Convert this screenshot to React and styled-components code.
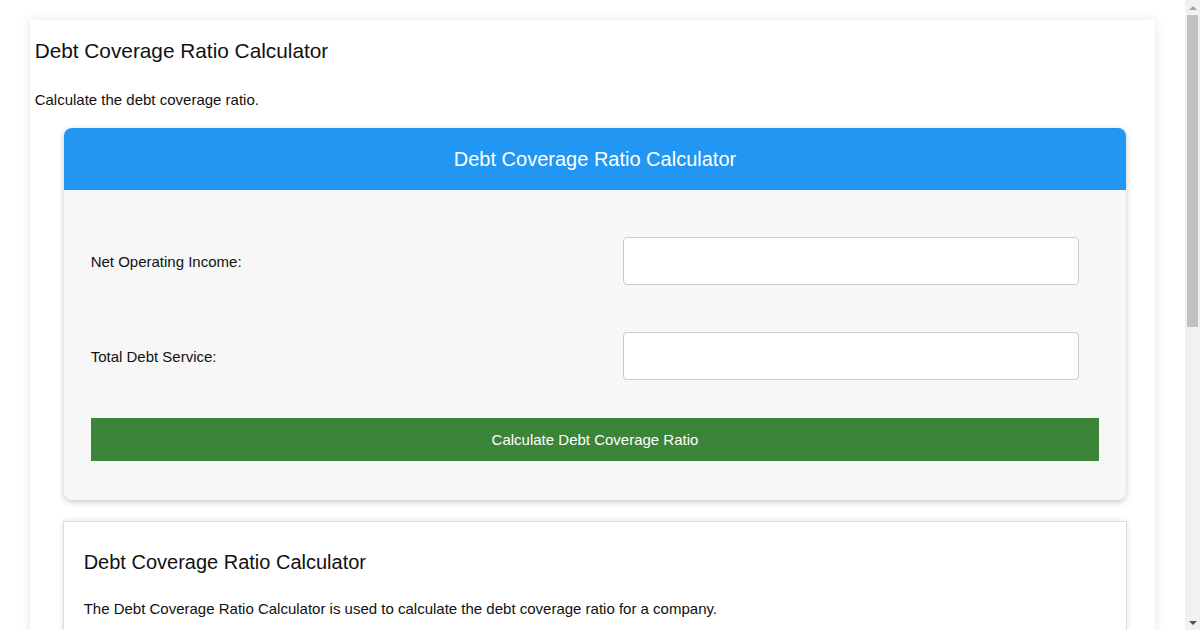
import React from "react";
import styled, { createGlobalStyle } from "styled-components";

const Global = createGlobalStyle`
  html, body { margin: 0; padding: 0; background: #ffffff; }
  html::-webkit-scrollbar { display: none; }
  html { scrollbar-width: none; }
  body { font-family: "Liberation Sans", Arial, sans-serif; color: #111; font-size: 15px; }
  * { box-sizing: border-box; }
`;

const Viewport = styled.div`
  display: flow-root;
  margin-right: 15px;
`;

const ScrollRail = styled.div`
  position: fixed;
  top: 0;
  right: 0;
  width: 15px;
  height: 100vh;
  background: #f1f1f1;
  display: flex;
  flex-direction: column;
  align-items: center;
  z-index: 10;
`;

const Arrow = styled.div`
  width: 15px;
  height: 15px;
  display: flex;
  align-items: center;
  justify-content: center;
  &::before {
    content: "";
    width: 0;
    height: 0;
    border-left: 4px solid transparent;
    border-right: 4px solid transparent;
    ${(p) =>
      p.$down
        ? `border-top: 4px solid #505050;`
        : `border-bottom: 4px solid #a3a3a3;`}
  }
`;

const Thumb = styled.div`
  width: 11px;
  height: 312px;
  background: #c1c1c1;
`;

const Spacer = styled.div`
  flex: 1;
`;

const Page = styled.div`
  display: flow-root;
  width: 95%;
  margin: 20px auto;
  padding: 0 0 20px 5px;
  background: #ffffff;
  box-shadow: 0 0 10px rgba(0, 0, 0, 0.1);
`;

const Title = styled.h2`
  margin: 19px 0 28px;
  font-size: 20.8px;
  line-height: 24px;
  font-weight: 400;
`;

const Intro = styled.p`
  margin: 0;
  font-size: 15px;
  line-height: 18px;
`;

const Card = styled.div`
  width: calc(95% - 2px);
  margin: 19px auto 0;
  border-radius: 8px;
  overflow: hidden;
  background: #f7f7f7;
  box-shadow: 0 2px 6px rgba(0, 0, 0, 0.22);
`;

const CardHeader = styled.div`
  height: 62px;
  background: #2196f3;
  color: #ffffff;
  display: flex;
  align-items: center;
  justify-content: center;
  font-size: 20px;
`;

const CardBody = styled.div`
  padding: 47px 27px 39px;
`;

const Row = styled.div`
  display: flex;
  align-items: center;
  justify-content: space-between;
  margin-bottom: ${(p) => p.$gap}px;
`;

const Label = styled.label`
  font-size: 15px;
`;

const Input = styled.input`
  width: 456px;
  height: 48px;
  margin-right: 20px;
  border: 1px solid #cccccc;
  border-radius: 4px;
  background: #ffffff;
  font-family: inherit;
  font-size: 15px;
  padding: 0 10px;
`;

const Button = styled.button`
  display: block;
  width: 100%;
  height: 43px;
  border: none;
  background: #3b8439;
  color: #ffffff;
  font-family: "Liberation Sans", Arial, sans-serif;
  font-size: 15px;
  cursor: pointer;
`;

const Info = styled.div`
  width: 95%;
  margin: 21px auto 0;
  padding: 28px 20px 20px;
  background: #ffffff;
  border: 1px solid #dddddd;
  box-shadow: 0 0 6px rgba(0, 0, 0, 0.12);
`;

const InfoTitle = styled.h3`
  margin: 0 0 26px;
  font-size: 20px;
  line-height: 24px;
  font-weight: 400;
`;

const InfoText = styled.p`
  margin: 0 0 22px;
  font-size: 15px;
  line-height: 18px;
`;

const Formula = styled.p`
  margin: 0 0 22px;
  font-size: 15px;
  line-height: 18px;
  font-weight: 700;
`;

export default function App() {
  return (
    <>
      <Global />
      <ScrollRail aria-hidden="true">
        <Arrow />
        <Thumb />
        <Spacer />
        <Arrow $down />
      </ScrollRail>
      <Viewport>
        <Page>
          <Title>Debt Coverage Ratio Calculator</Title>
          <Intro>Calculate the debt coverage ratio.</Intro>
          <Card>
            <CardHeader>Debt Coverage Ratio Calculator</CardHeader>
            <CardBody>
              <Row $gap={47}>
                <Label htmlFor="noi">Net Operating Income:</Label>
                <Input id="noi" type="number" />
              </Row>
              <Row $gap={38}>
                <Label htmlFor="tds">Total Debt Service:</Label>
                <Input id="tds" type="number" />
              </Row>
              <Button type="button">Calculate Debt Coverage Ratio</Button>
            </CardBody>
          </Card>
          <Info>
            <InfoTitle>Debt Coverage Ratio Calculator</InfoTitle>
            <InfoText>
              The Debt Coverage Ratio Calculator is used to calculate the debt coverage ratio for a company.
            </InfoText>
            <InfoTitle>Debt Coverage Ratio Formula</InfoTitle>
            <Formula>Debt Coverage Ratio = Net Operating Income / Total Debt Service</Formula>
            <InfoText>
              The debt coverage ratio, also known as the debt service coverage ratio (DSCR), measures a
              company's ability to pay its current debt obligations using the cash flow generated by its
              operations.
            </InfoText>
            <InfoText>
              A ratio greater than 1 means the company generates enough income to cover its debt payments,
              while a ratio below 1 indicates that the income is not sufficient to pay the debt service.
            </InfoText>
            <InfoTitle>How to Use the Calculator</InfoTitle>
            <InfoText>
              Enter the net operating income and the total debt service, then click the calculate button to
              see the debt coverage ratio.
            </InfoText>
            <InfoText>
              Net operating income is the revenue of the company minus its operating expenses. Total debt
              service is the sum of all principal and interest payments due within the period.
            </InfoText>
          </Info>
        </Page>
      </Viewport>
    </>
  );
}
